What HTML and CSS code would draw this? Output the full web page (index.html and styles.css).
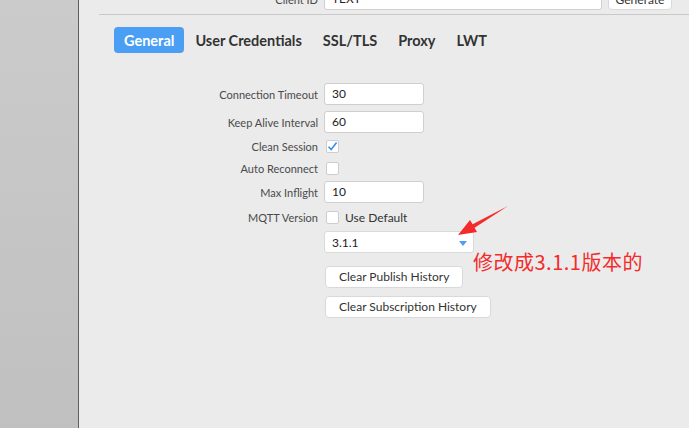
FILE: index.html
```html
<!DOCTYPE html>
<html lang="en">
<head>
    <meta charset="UTF-8">
    <title>MQTT Connection Settings</title>
    <link rel="stylesheet" href="styles.css">
</head>
<body>
    <div class="sidebar"></div>

    <div class="main">
        <div class="client-row">
            <label class="field-label">Client ID</label>
            <div class="text-input">TEXT</div>
            <button class="btn generate-btn">Generate</button>
        </div>
        <div class="divider"></div>

        <div class="tabs">
            <div class="tab active">General</div>
            <div class="tab">User Credentials</div>
            <div class="tab">SSL/TLS</div>
            <div class="tab">Proxy</div>
            <div class="tab">LWT</div>
        </div>

        <div class="form">
            <div class="row row-timeout">
                <label class="field-label">Connection Timeout</label>
                <div class="text-input short">30</div>
            </div>
            <div class="row row-keepalive">
                <label class="field-label">Keep Alive Interval</label>
                <div class="text-input short">60</div>
            </div>
            <div class="row row-check row-clean">
                <label class="field-label">Clean Session</label>
                <span class="checkbox checked">
                    <svg width="13" height="13" viewBox="0 0 13 13"><path d="M2.5 6.8 L5.2 9.6 L10.6 2.6" fill="none" stroke="#3d8fe8" stroke-width="1.6"/></svg>
                </span>
            </div>
            <div class="row row-check row-reconnect">
                <label class="field-label">Auto Reconnect</label>
                <span class="checkbox"></span>
            </div>
            <div class="row row-inflight">
                <label class="field-label">Max Inflight</label>
                <div class="text-input short">10</div>
            </div>
            <div class="row row-check row-version">
                <label class="field-label">MQTT Version</label>
                <div class="check-line">
                    <span class="checkbox"></span>
                    <span class="check-text">Use Default</span>
                </div>
            </div>
            <div class="row row-select">
                <span></span>
                <div class="select">
                    <span>3.1.1</span>
                    <span class="caret"></span>
                </div>
            </div>
            <div class="row row-btn-publish">
                <span></span>
                <div><button class="btn">Clear Publish History</button></div>
            </div>
            <div class="row row-btn-sub">
                <span></span>
                <div><button class="btn">Clear Subscription History</button></div>
            </div>
        </div>

        <!-- 标注 -->
        <svg class="note-arrow" width="70" height="45" viewBox="0 0 70 45">
            <polygon points="8,35 27,32 24.6,27.7 58,6 22.6,24.3 20,20" fill="#f42b2b"/>
        </svg>
        <div class="note-text">修改成3.1.1版本的</div>
    </div>
</body>
</html>
```

FILE: styles.css
```css
* {
    margin: 0;
    padding: 0;
    box-sizing: border-box;
}

body {
    display: flex;
    height: 428px;
    overflow: hidden;
    font-family: Lato, "Open Sans", sans-serif;
    color: #333;
}

.sidebar {
    width: 79px;
    background: linear-gradient(#cbcbcb, #c0c0c0);
    border-right: 1px solid #5e5e5e;
}

.main {
    position: relative;
    flex: 1;
    background: #ebebeb;
    padding-left: 20px;
}

/* 顶部 Client ID 行 */
.client-row {
    display: grid;
    grid-template-columns: 219px 278px 64px;
    column-gap: 6px;
    align-items: center;
    height: 24px;
    margin-top: -13px;
}

.divider {
    height: 1px;
    background: #c9c9c9;
    margin-top: 3px;
}

.tabs {
    display: flex;
    gap: 1px;
    margin-top: 12px;
    padding-left: 15px;
    height: 26px;
}

.tab {
    display: flex;
    align-items: center;
    padding: 0 10px;
    font-size: 14.5px;
    font-weight: 700;
    color: #333;
    border-radius: 4px;
}

.tab.active {
    background: #4a9ff5;
    color: #fff;
}

/* 表单 */
.form {
    display: flex;
    flex-direction: column;
    margin-top: 30px;
}

.row {
    display: grid;
    grid-template-columns: 219px 1fr;
    column-gap: 6px;
    align-items: center;
    height: 22px;
}

.row-check {
    height: 20px;
}

.row-keepalive { margin-top: 6px; }
.row-clean { margin-top: 3px; }
.row-reconnect { margin-top: 2px; }
.row-inflight { margin-top: 3px; }
.row-version { margin-top: 4px; }
.row-select { margin-top: 4px; }
.row-btn-publish { margin-top: 12px; }
.row-btn-sub { margin-top: 8px; }

.field-label {
    text-align: right;
    font-size: 11px;
    color: #4a4a4a;
    white-space: nowrap;
}

.text-input {
    height: 22px;
    background: #fff;
    border: 1px solid #cfcfcf;
    border-radius: 3px;
    padding-left: 7px;
    font-size: 12px;
    line-height: 20px;
    color: #222;
}

.text-input.short {
    width: 100px;
}

.checkbox {
    display: inline-block;
    width: 13px;
    height: 13px;
    margin-left: 2px;
    background: #fff;
    border: 1px solid #cdcdcd;
    border-radius: 2px;
    position: relative;
}

.checkbox svg {
    position: absolute;
    left: -1px;
    top: -1px;
}

.check-line {
    display: flex;
    align-items: center;
}

.check-text {
    margin-left: 6px;
    font-size: 12px;
    color: #333;
}

.select {
    display: flex;
    align-items: center;
    justify-content: space-between;
    width: 150px;
    height: 22px;
    background: #fff;
    border: 1px solid #dadada;
    border-radius: 3px;
    padding: 0 6px 0 7px;
    font-size: 12px;
    color: #222;
}

.caret {
    width: 0;
    height: 0;
    border-left: 4px solid transparent;
    border-right: 4px solid transparent;
    border-top: 5px solid #4a9ff5;
    margin-top: 2px;
}

.btn {
    height: 22px;
    padding: 0 13px;
    background: #fff;
    border: 1px solid #d9d9d9;
    border-radius: 4px;
    font-family: Lato, "Open Sans", sans-serif;
    font-size: 12px;
    color: #333;
    margin-left: 1px;
}

.generate-btn {
    margin-left: 0;
    width: 64px;
    padding: 0;
}

/* 红色标注 */
.note-arrow {
    position: absolute;
    left: 371px;
    top: 200px;
}

.note-text {
    position: absolute;
    left: 394px;
    top: 247px;
    font-family: "Noto Sans CJK SC", sans-serif;
    font-size: 20px;
    letter-spacing: 0.5px;
    color: #f42b2b;
    white-space: nowrap;
}
```
